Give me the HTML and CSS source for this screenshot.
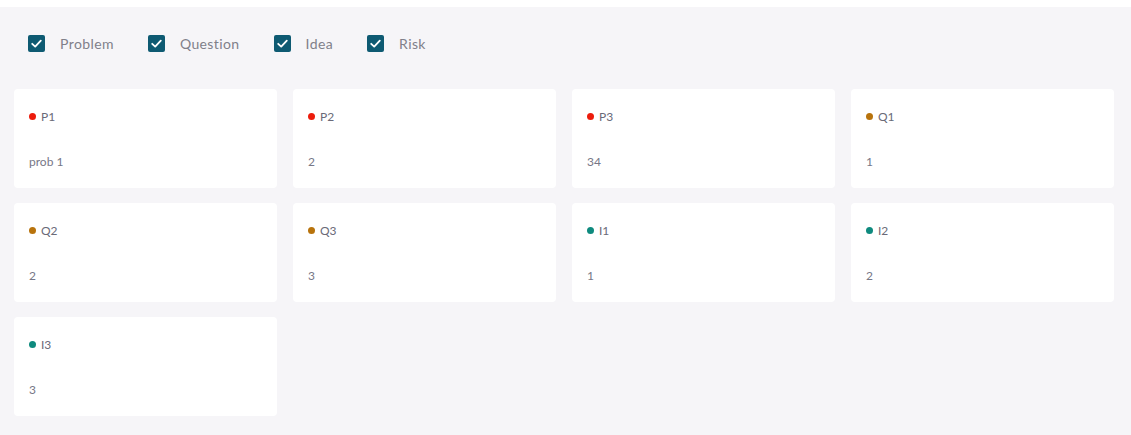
FILE: index.html
```html
<!DOCTYPE html>
<html>
<head>
<meta charset="utf-8">
<link rel="stylesheet" href="styles.css">
</head>
<body>
<div class="app">
  <div class="filters">
    <label class="filter"><span class="box"><svg viewBox="0 0 17 17" width="17" height="17"><path d="M4.2 8.8 L7.2 11.6 L12.8 5.6" fill="none" stroke="#fff" stroke-width="1.8" stroke-linecap="round" stroke-linejoin="round"/></svg></span><span class="label">Problem</span></label>
    <label class="filter"><span class="box"><svg viewBox="0 0 17 17" width="17" height="17"><path d="M4.2 8.8 L7.2 11.6 L12.8 5.6" fill="none" stroke="#fff" stroke-width="1.8" stroke-linecap="round" stroke-linejoin="round"/></svg></span><span class="label">Question</span></label>
    <label class="filter"><span class="box"><svg viewBox="0 0 17 17" width="17" height="17"><path d="M4.2 8.8 L7.2 11.6 L12.8 5.6" fill="none" stroke="#fff" stroke-width="1.8" stroke-linecap="round" stroke-linejoin="round"/></svg></span><span class="label">Idea</span></label>
    <label class="filter"><span class="box"><svg viewBox="0 0 17 17" width="17" height="17"><path d="M4.2 8.8 L7.2 11.6 L12.8 5.6" fill="none" stroke="#fff" stroke-width="1.8" stroke-linecap="round" stroke-linejoin="round"/></svg></span><span class="label">Risk</span></label>
  </div>
  <div class="grid">
    <div class="card"><div class="title"><span class="dot problem"></span>P1</div><div class="body">prob 1</div></div>
    <div class="card"><div class="title"><span class="dot problem"></span>P2</div><div class="body">2</div></div>
    <div class="card"><div class="title"><span class="dot problem"></span>P3</div><div class="body">34</div></div>
    <div class="card"><div class="title"><span class="dot question"></span>Q1</div><div class="body">1</div></div>
    <div class="card"><div class="title"><span class="dot question"></span>Q2</div><div class="body">2</div></div>
    <div class="card"><div class="title"><span class="dot question"></span>Q3</div><div class="body">3</div></div>
    <div class="card"><div class="title"><span class="dot idea"></span>I1</div><div class="body">1</div></div>
    <div class="card"><div class="title"><span class="dot idea"></span>I2</div><div class="body">2</div></div>
    <div class="card"><div class="title"><span class="dot idea"></span>I3</div><div class="body">3</div></div>
  </div>
</div>
</body>
</html>
```

FILE: styles.css
```css
html, body {
  margin: 0;
  padding: 0;
  background: #ffffff;
}
body {
  font-family: "Lato", "Open Sans", sans-serif;
  overflow: hidden;
}
.app {
  margin-top: 7px;
  height: 428px;
  background: #f6f5f8;
  padding: 28px 17px 0 14px;
  box-sizing: border-box;
}
.filters {
  display: flex;
  align-items: center;
  gap: 34px;
  padding-left: 14px;
  height: 17px;
}
.filter {
  display: flex;
  align-items: center;
  gap: 15px;
}
.box {
  width: 17px;
  height: 17px;
  border-radius: 2px;
  background: #0e5a72;
  display: block;
}
.box svg { display: block; }
.label {
  font-size: 14px;
  color: #80808a;
  letter-spacing: 0.4px;
}
.grid {
  margin-top: 37px;
  display: grid;
  grid-template-columns: repeat(4, 263px);
  column-gap: 16px;
  row-gap: 15px;
}
.card {
  background: #ffffff;
  border-radius: 4px;
  height: 99px;
  padding: 20px 15px 0 15px;
  box-sizing: border-box;
}
.title {
  display: flex;
  align-items: center;
  gap: 5px;
  font-size: 12px;
  color: #6a6a78;
  height: 14px;
}
.dot {
  width: 7px;
  height: 7px;
  border-radius: 50%;
  display: block;
}
.dot.problem { background: #ec1c0c; }
.dot.question { background: #b8730c; }
.dot.idea { background: #0e8a7e; }
.body {
  margin-top: 32px;
  font-size: 12px;
  color: #777787;
  height: 14px;
  line-height: 14px;
}
```
